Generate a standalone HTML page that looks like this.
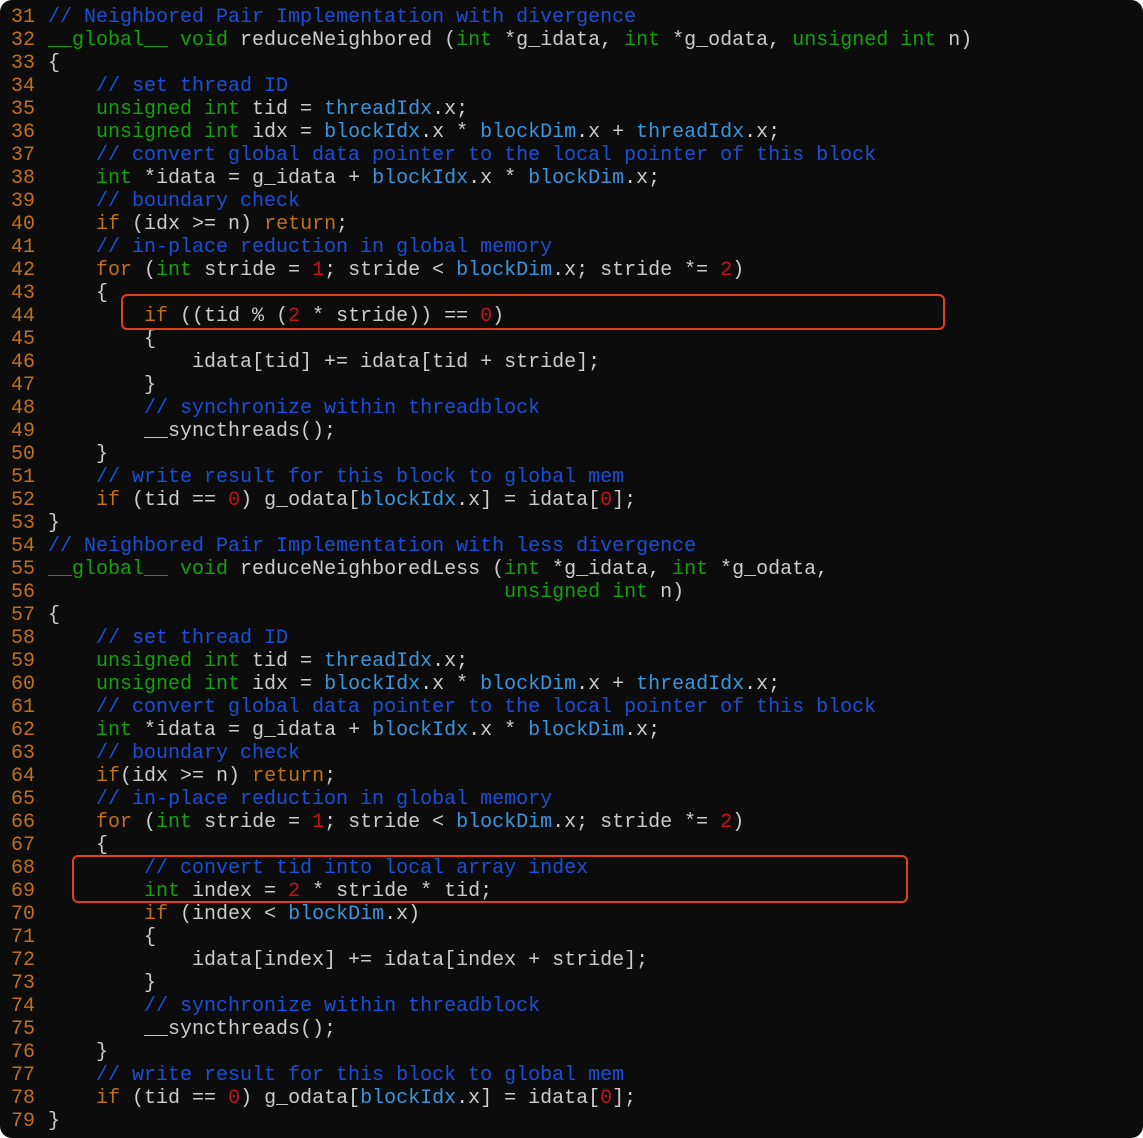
<!DOCTYPE html>
<html><head><meta charset="utf-8"><style>
html,body{margin:0;padding:0;background:#fff;}
#w{position:relative;width:1143px;height:1138px;background:#0c0c0c;border-radius:12px;overflow:hidden;}
.l{position:absolute;left:0;height:23px;line-height:23px;font-family:"Liberation Mono","DejaVu Sans Mono",monospace;font-size:20px;white-space:pre;color:#cccccc;}
.ln{display:inline-block;width:36px;padding-left:11px;box-sizing:border-box;color:#c1701c;}
.c{color:#1a4fd8}.k{color:#13a10e}.o{color:#c1701c}.b{color:#3a96dd}.n{color:#c50f1f}
.box{position:absolute;border:2px solid #e0401c;border-radius:6px;box-sizing:border-box;}
</style></head><body><div id="w">
<div class="l" style="top:6px"><span class="ln">31</span> <span class="c">// Neighbored Pair Implementation with divergence</span></div>
<div class="l" style="top:29px"><span class="ln">32</span> <span class="k">__global__ void</span> reduceNeighbored (<span class="k">int</span> *g_idata, <span class="k">int</span> *g_odata, <span class="k">unsigned int</span> n)</div>
<div class="l" style="top:52px"><span class="ln">33</span> {</div>
<div class="l" style="top:75px"><span class="ln">34</span>     <span class="c">// set thread ID</span></div>
<div class="l" style="top:98px"><span class="ln">35</span>     <span class="k">unsigned int</span> tid = <span class="b">threadIdx</span>.x;</div>
<div class="l" style="top:121px"><span class="ln">36</span>     <span class="k">unsigned int</span> idx = <span class="b">blockIdx</span>.x * <span class="b">blockDim</span>.x + <span class="b">threadIdx</span>.x;</div>
<div class="l" style="top:144px"><span class="ln">37</span>     <span class="c">// convert global data pointer to the local pointer of this block</span></div>
<div class="l" style="top:167px"><span class="ln">38</span>     <span class="k">int</span> *idata = g_idata + <span class="b">blockIdx</span>.x * <span class="b">blockDim</span>.x;</div>
<div class="l" style="top:190px"><span class="ln">39</span>     <span class="c">// boundary check</span></div>
<div class="l" style="top:213px"><span class="ln">40</span>     <span class="o">if</span> (idx &gt;= n) <span class="o">return</span>;</div>
<div class="l" style="top:236px"><span class="ln">41</span>     <span class="c">// in-place reduction in global memory</span></div>
<div class="l" style="top:259px"><span class="ln">42</span>     <span class="o">for</span> (<span class="k">int</span> stride = <span class="n">1</span>; stride &lt; <span class="b">blockDim</span>.x; stride *= <span class="n">2</span>)</div>
<div class="l" style="top:282px"><span class="ln">43</span>     {</div>
<div class="l" style="top:305px"><span class="ln">44</span>         <span class="o">if</span> ((tid % (<span class="n">2</span> * stride)) == <span class="n">0</span>)</div>
<div class="l" style="top:328px"><span class="ln">45</span>         {</div>
<div class="l" style="top:351px"><span class="ln">46</span>             idata[tid] += idata[tid + stride];</div>
<div class="l" style="top:374px"><span class="ln">47</span>         }</div>
<div class="l" style="top:397px"><span class="ln">48</span>         <span class="c">// synchronize within threadblock</span></div>
<div class="l" style="top:420px"><span class="ln">49</span>         __syncthreads();</div>
<div class="l" style="top:443px"><span class="ln">50</span>     }</div>
<div class="l" style="top:466px"><span class="ln">51</span>     <span class="c">// write result for this block to global mem</span></div>
<div class="l" style="top:489px"><span class="ln">52</span>     <span class="o">if</span> (tid == <span class="n">0</span>) g_odata[<span class="b">blockIdx</span>.x] = idata[<span class="n">0</span>];</div>
<div class="l" style="top:512px"><span class="ln">53</span> }</div>
<div class="l" style="top:535px"><span class="ln">54</span> <span class="c">// Neighbored Pair Implementation with less divergence</span></div>
<div class="l" style="top:558px"><span class="ln">55</span> <span class="k">__global__ void</span> reduceNeighboredLess (<span class="k">int</span> *g_idata, <span class="k">int</span> *g_odata,</div>
<div class="l" style="top:581px"><span class="ln">56</span>                                       <span class="k">unsigned int</span> n)</div>
<div class="l" style="top:604px"><span class="ln">57</span> {</div>
<div class="l" style="top:627px"><span class="ln">58</span>     <span class="c">// set thread ID</span></div>
<div class="l" style="top:650px"><span class="ln">59</span>     <span class="k">unsigned int</span> tid = <span class="b">threadIdx</span>.x;</div>
<div class="l" style="top:673px"><span class="ln">60</span>     <span class="k">unsigned int</span> idx = <span class="b">blockIdx</span>.x * <span class="b">blockDim</span>.x + <span class="b">threadIdx</span>.x;</div>
<div class="l" style="top:696px"><span class="ln">61</span>     <span class="c">// convert global data pointer to the local pointer of this block</span></div>
<div class="l" style="top:719px"><span class="ln">62</span>     <span class="k">int</span> *idata = g_idata + <span class="b">blockIdx</span>.x * <span class="b">blockDim</span>.x;</div>
<div class="l" style="top:742px"><span class="ln">63</span>     <span class="c">// boundary check</span></div>
<div class="l" style="top:765px"><span class="ln">64</span>     <span class="o">if</span>(idx &gt;= n) <span class="o">return</span>;</div>
<div class="l" style="top:788px"><span class="ln">65</span>     <span class="c">// in-place reduction in global memory</span></div>
<div class="l" style="top:811px"><span class="ln">66</span>     <span class="o">for</span> (<span class="k">int</span> stride = <span class="n">1</span>; stride &lt; <span class="b">blockDim</span>.x; stride *= <span class="n">2</span>)</div>
<div class="l" style="top:834px"><span class="ln">67</span>     {</div>
<div class="l" style="top:857px"><span class="ln">68</span>         <span class="c">// convert tid into local array index</span></div>
<div class="l" style="top:880px"><span class="ln">69</span>         <span class="k">int</span> index = <span class="n">2</span> * stride * tid;</div>
<div class="l" style="top:903px"><span class="ln">70</span>         <span class="o">if</span> (index &lt; <span class="b">blockDim</span>.x)</div>
<div class="l" style="top:926px"><span class="ln">71</span>         {</div>
<div class="l" style="top:949px"><span class="ln">72</span>             idata[index] += idata[index + stride];</div>
<div class="l" style="top:972px"><span class="ln">73</span>         }</div>
<div class="l" style="top:995px"><span class="ln">74</span>         <span class="c">// synchronize within threadblock</span></div>
<div class="l" style="top:1018px"><span class="ln">75</span>         __syncthreads();</div>
<div class="l" style="top:1041px"><span class="ln">76</span>     }</div>
<div class="l" style="top:1064px"><span class="ln">77</span>     <span class="c">// write result for this block to global mem</span></div>
<div class="l" style="top:1087px"><span class="ln">78</span>     <span class="o">if</span> (tid == <span class="n">0</span>) g_odata[<span class="b">blockIdx</span>.x] = idata[<span class="n">0</span>];</div>
<div class="l" style="top:1110px"><span class="ln">79</span> }</div>
<div class="box" style="left:121px;top:294px;width:824px;height:36px"></div>
<div class="box" style="left:72px;top:855px;width:836px;height:48px"></div>
</div></body></html>
